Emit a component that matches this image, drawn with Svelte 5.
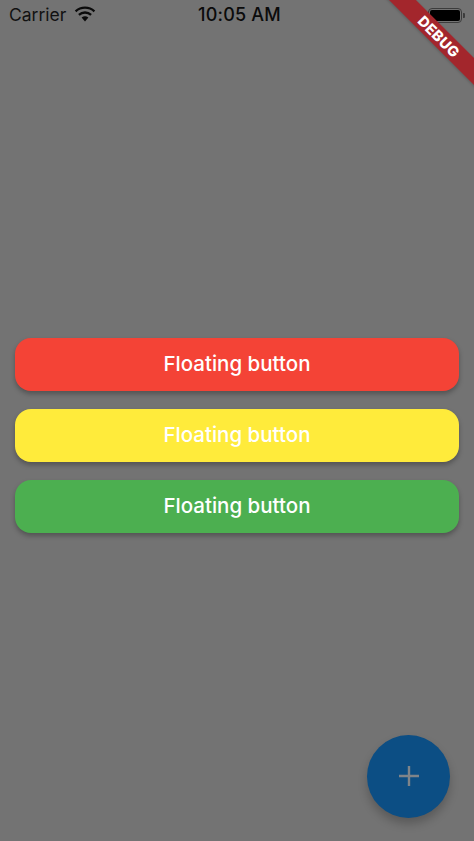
<script>
  const buttons = [
    { color: '#f44336' },
    { color: '#ffeb3b' },
    { color: '#4caf50' }
  ];
</script>

<div class="screen">
  <header class="status">
    <div class="left">
      <span class="carrier">Carrier</span>
      <svg class="wifi" width="22" height="16" viewBox="0 0 22 16" aria-hidden="true">
        <path d="M11 15.5 L7.6 11.6 A5.2 5.2 0 0 1 14.4 11.6 Z" fill="#0b0b0b"/>
        <path d="M4.9 8.8 A9.2 9.2 0 0 1 17.1 8.8" fill="none" stroke="#0b0b0b" stroke-width="2.3"/>
        <path d="M1.6 5.3 A14 14 0 0 1 20.4 5.3" fill="none" stroke="#0b0b0b" stroke-width="2.3"/>
      </svg>
    </div>
    <span class="time">10:05 AM</span>
    <div class="right">
      <div class="battery"><div class="level"></div></div>
      <div class="nub"></div>
    </div>
  </header>

  <main class="list">
    {#each buttons as b}
      <button class="action" style="background: {b.color}">Floating button</button>
    {/each}
  </main>

  <button class="fab" aria-label="Add">
    <svg width="24" height="24" viewBox="0 0 24 24" aria-hidden="true">
      <path d="M12 2V22M2 12H22" stroke="#7f8489" stroke-width="2.4" fill="none"/>
    </svg>
  </button>

  <div class="ribbon">DEBUG</div>
</div>

<style>
  :global(body) {
    margin: 0;
    background: #737373;
  }
  .screen {
    position: relative;
    width: 474px;
    height: 841px;
    overflow: hidden;
    background: #737373;
    display: flex;
    flex-direction: column;
    font-family: Inter, "Liberation Sans", sans-serif;
  }
  .status {
    display: grid;
    grid-template-columns: 1fr auto 1fr;
    align-items: center;
    height: 30px;
    padding: 0 9px 0 9px;
    color: #0b0b0b;
  }
  .left {
    display: flex;
    align-items: center;
    gap: 8px;
  }
  .carrier {
    font-size: 17.5px;
    color: #111;
    margin-bottom: 2px;
  }
  .wifi {
    margin-top: -2px;
  }
  .time {
    font-size: 18px;
    font-weight: 500;
    letter-spacing: 0.2px;
    margin: 0 0 2px 5px;
  }
  .right {
    display: flex;
    align-items: center;
    justify-content: flex-end;
    gap: 1px;
  }
  .battery {
    box-sizing: border-box;
    width: 34px;
    height: 15px;
    border: 1px solid #3c3c3c;
    border-radius: 4px;
    padding: 1px;
    display: flex;
  }
  .level {
    flex: 1;
    background: #000;
    border-radius: 2px;
  }
  .nub {
    width: 2px;
    height: 5px;
    background: #3c3c3c;
    border-radius: 0 1px 1px 0;
  }
  .list {
    flex: 1;
    display: flex;
    flex-direction: column;
    justify-content: center;
    gap: 18px;
    padding: 0 15px;
  }
  .action {
    height: 53px;
    border: none;
    border-radius: 16px;
    padding: 0 0 2px;
    color: #fff;
    font-family: inherit;
    font-size: 20.5px;
    font-weight: 500;
    box-shadow: 0 3px 5px rgba(0, 0, 0, 0.28);
  }
  .fab {
    position: absolute;
    left: 367px;
    top: 735px;
    width: 83px;
    height: 83px;
    border: none;
    border-radius: 50%;
    background: #0c4e84;
    display: flex;
    align-items: center;
    justify-content: center;
    padding: 0 0 2px;
    box-shadow: 0 6px 10px rgba(0, 0, 0, 0.22);
  }
  .ribbon {
    position: absolute;
    top: 27px;
    right: -31px;
    width: 132px;
    height: 19px;
    line-height: 19px;
    text-align: center;
    transform: rotate(45deg);
    background: #a3262c;
    color: #fff;
    font-size: 14.5px;
    font-weight: 800;
    letter-spacing: 0.3px;
    box-shadow: 0 1px 3px rgba(0, 0, 0, 0.2);
  }
</style>
